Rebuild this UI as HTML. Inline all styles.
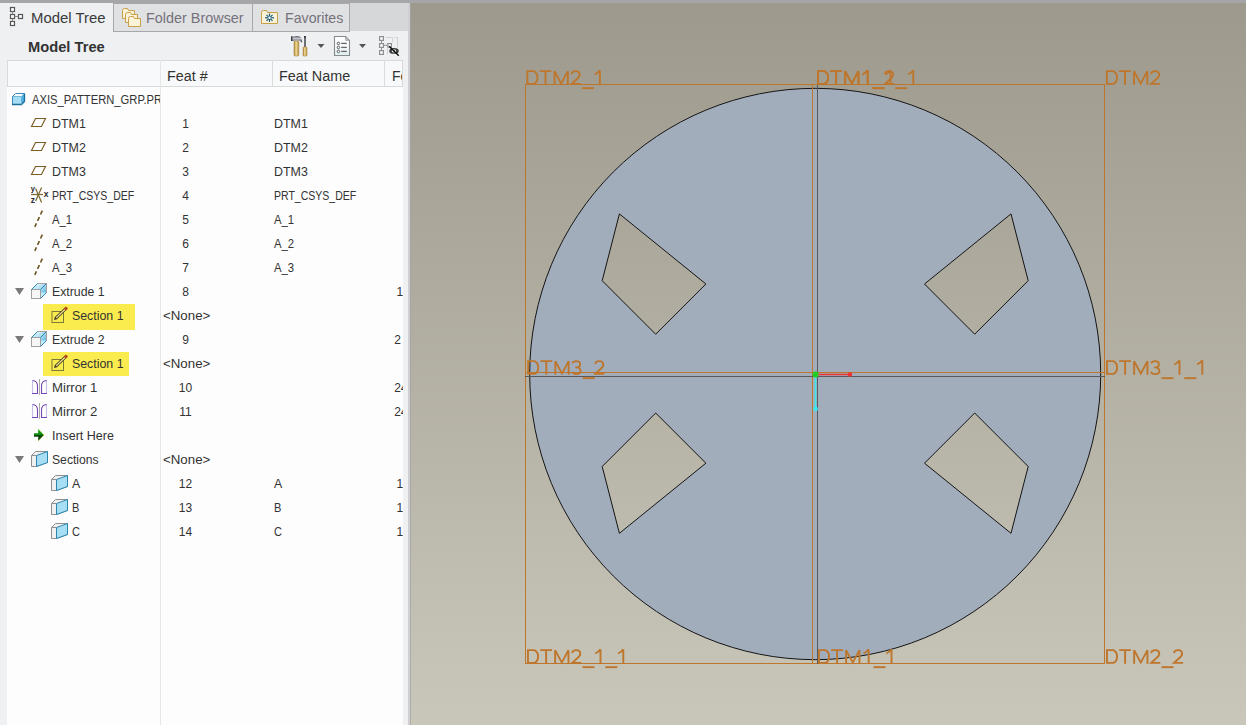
<!DOCTYPE html>
<html><head><meta charset="utf-8"><title>Model Tree</title>
<style>
html,body{margin:0;padding:0;width:1246px;height:725px;overflow:hidden;background:#eef0f2;}
svg text{font-family:"Liberation Sans", sans-serif;}
svg{display:block;}
</style></head>
<body>
<svg width="1246" height="725" viewBox="0 0 1246 725" style='font-family:"Liberation Sans", sans-serif'>
<defs>
<linearGradient id="bg" x1="0" y1="3" x2="0" y2="725" gradientUnits="userSpaceOnUse">
<stop offset="0" stop-color="#9d9a8d"/>
<stop offset="1" stop-color="#c9c6ba"/>
</linearGradient>
<linearGradient id="cubeF" x1="0" y1="0" x2="1" y2="1">
<stop offset="0" stop-color="#e4f6fc"/><stop offset="1" stop-color="#62b8e2"/>
</linearGradient>
</defs>
<rect x="0" y="0" width="1246" height="725" fill="#eef0f2"/>
<rect x="410" y="3" width="836" height="722" fill="url(#bg)"/>
<rect x="0" y="0" width="1246" height="3" fill="#a6a5a8"/>
<path d="M529.7,374 A285.5,285.5 0 1,0 1100.7,374 A285.5,285.5 0 1,0 529.7,374 Z M619.4,213.9 L705.9,284.0 L655.7,334.2 L602.2,280.7 Z M1011.0,213.9 L924.5,284.0 L974.7,334.2 L1028.2,280.7 Z M619.4,533.3 L705.9,463.2 L655.7,413.0 L602.2,466.5 Z M1011.0,533.3 L924.5,463.2 L974.7,413.0 L1028.2,466.5 Z " fill="#a2adbc" fill-rule="evenodd" stroke="#141414" stroke-width="1"/>
<rect x="525.5" y="84.5" width="579" height="579" fill="none" stroke="#be762c" stroke-width="1"/>
<line x1="525" y1="372.5" x2="1105" y2="372.5" stroke="#be762c" stroke-width="1"/>
<line x1="812.5" y1="84" x2="812.5" y2="664" stroke="#be762c" stroke-width="1"/>
<line x1="817.5" y1="85" x2="817.5" y2="664" stroke="#5a5a5a" stroke-width="1"/>
<line x1="525" y1="376.5" x2="1105" y2="376.5" stroke="#5a5a5a" stroke-width="1"/>
<line x1="815" y1="374.5" x2="850" y2="374.5" stroke="#f03030" stroke-width="1.6"/>
<circle cx="850" cy="374.5" r="2.2" fill="#f03030"/>
<line x1="815.5" y1="374" x2="815.5" y2="409" stroke="#3ce8f0" stroke-width="1.6"/>
<circle cx="815.5" cy="409" r="2.4" fill="#3ce8f0"/>
<circle cx="815.5" cy="374.5" r="3" fill="#20d020"/>
<g fill="none" stroke="#be762c" stroke-width="1.9" stroke-linejoin="miter"><path transform="translate(526.40,84.8)" d="M0.95,-0.95 L0.95,-13.65 L7.3,-13.65 C8.8,-13.2 10.2,-11.6 10.9,-9.5 L11.05,-7.3 L10.9,-5.1 C10.2,-3 8.8,-1.4 7.3,-0.95 Z"/><path transform="translate(539.60,84.8)" d="M0,-13.65 L11.8,-13.65 M5.9,-13.65 L5.9,0"/><path transform="translate(553.60,84.8)" d="M0.95,0 L0.95,-13.65 L7.6,-1.2 L14.25,-13.65 L14.25,0"/><path transform="translate(570.50,84.8)" d="M1.1,-10.6 C1.3,-12.9 2.9,-13.65 5.2,-13.65 C7.7,-13.65 9.2,-12.3 9.2,-10.1 C9.2,-8.2 8,-6.9 5.6,-5 L1.2,-0.95 L10.2,-0.95"/><path transform="translate(581.90,84.8)" d="M0,3.35 L12,3.35"/><path transform="translate(593.30,84.8)" d="M1.4,-10.3 C3.5,-11.2 5.2,-12.4 6.5,-14.6 M6.6,-14.6 L6.6,0"/></g>
<g fill="none" stroke="#be762c" stroke-width="1.9" stroke-linejoin="miter"><path transform="translate(817.00,84.8)" d="M0.95,-0.95 L0.95,-13.65 L7.3,-13.65 C8.8,-13.2 10.2,-11.6 10.9,-9.5 L11.05,-7.3 L10.9,-5.1 C10.2,-3 8.8,-1.4 7.3,-0.95 Z"/><path transform="translate(830.20,84.8)" d="M0,-13.65 L11.8,-13.65 M5.9,-13.65 L5.9,0"/><path transform="translate(844.20,84.8)" d="M0.95,0 L0.95,-13.65 L7.6,-1.2 L14.25,-13.65 L14.25,0"/><path transform="translate(861.10,84.8)" d="M1.4,-10.3 C3.5,-11.2 5.2,-12.4 6.5,-14.6 M6.6,-14.6 L6.6,0"/><path transform="translate(872.50,84.8)" d="M0,3.35 L12,3.35"/><path transform="translate(883.90,84.8)" d="M1.4,-10.3 C3.5,-11.2 5.2,-12.4 6.5,-14.6 M6.6,-14.6 L6.6,0"/><path transform="translate(895.30,84.8)" d="M0,3.35 L12,3.35"/><path transform="translate(906.70,84.8)" d="M1.4,-10.3 C3.5,-11.2 5.2,-12.4 6.5,-14.6 M6.6,-14.6 L6.6,0"/></g>
<g fill="none" stroke="#be762c" stroke-width="1.9" stroke-linejoin="miter"><path transform="translate(817.00,84.8)" d="M0.95,-0.95 L0.95,-13.65 L7.3,-13.65 C8.8,-13.2 10.2,-11.6 10.9,-9.5 L11.05,-7.3 L10.9,-5.1 C10.2,-3 8.8,-1.4 7.3,-0.95 Z"/><path transform="translate(830.20,84.8)" d="M0,-13.65 L11.8,-13.65 M5.9,-13.65 L5.9,0"/><path transform="translate(844.20,84.8)" d="M0.95,0 L0.95,-13.65 L7.6,-1.2 L14.25,-13.65 L14.25,0"/><path transform="translate(861.10,84.8)" d="M1.4,-10.3 C3.5,-11.2 5.2,-12.4 6.5,-14.6 M6.6,-14.6 L6.6,0"/><path transform="translate(872.50,84.8)" d="M0,3.35 L12,3.35"/><path transform="translate(883.90,84.8)" d="M1.1,-10.6 C1.3,-12.9 2.9,-13.65 5.2,-13.65 C7.7,-13.65 9.2,-12.3 9.2,-10.1 C9.2,-8.2 8,-6.9 5.6,-5 L1.2,-0.95 L10.2,-0.95"/></g>
<g fill="none" stroke="#be762c" stroke-width="1.9" stroke-linejoin="miter"><path transform="translate(1105.90,84.8)" d="M0.95,-0.95 L0.95,-13.65 L7.3,-13.65 C8.8,-13.2 10.2,-11.6 10.9,-9.5 L11.05,-7.3 L10.9,-5.1 C10.2,-3 8.8,-1.4 7.3,-0.95 Z"/><path transform="translate(1119.10,84.8)" d="M0,-13.65 L11.8,-13.65 M5.9,-13.65 L5.9,0"/><path transform="translate(1133.10,84.8)" d="M0.95,0 L0.95,-13.65 L7.6,-1.2 L14.25,-13.65 L14.25,0"/><path transform="translate(1150.00,84.8)" d="M1.1,-10.6 C1.3,-12.9 2.9,-13.65 5.2,-13.65 C7.7,-13.65 9.2,-12.3 9.2,-10.1 C9.2,-8.2 8,-6.9 5.6,-5 L1.2,-0.95 L10.2,-0.95"/></g>
<g fill="none" stroke="#be762c" stroke-width="1.9" stroke-linejoin="miter"><path transform="translate(527.20,374.8)" d="M0.95,-0.95 L0.95,-13.65 L7.3,-13.65 C8.8,-13.2 10.2,-11.6 10.9,-9.5 L11.05,-7.3 L10.9,-5.1 C10.2,-3 8.8,-1.4 7.3,-0.95 Z"/><path transform="translate(540.40,374.8)" d="M0,-13.65 L11.8,-13.65 M5.9,-13.65 L5.9,0"/><path transform="translate(554.40,374.8)" d="M0.95,0 L0.95,-13.65 L7.6,-1.2 L14.25,-13.65 L14.25,0"/><path transform="translate(571.30,374.8)" d="M1.0,-11.6 C1.7,-13.1 3.1,-13.65 5.0,-13.65 C7.5,-13.65 8.8,-12.3 8.8,-10.4 C8.8,-8.4 7.3,-7.4 4.9,-7.4 L4.0,-7.4 M4.9,-7.4 C7.8,-7.4 9.3,-5.9 9.3,-3.8 C9.3,-1.7 7.6,-0.7 5.0,-0.7 C2.8,-0.7 1.4,-1.4 0.8,-2.9"/><path transform="translate(582.70,374.8)" d="M0,3.35 L12,3.35"/><path transform="translate(594.10,374.8)" d="M1.1,-10.6 C1.3,-12.9 2.9,-13.65 5.2,-13.65 C7.7,-13.65 9.2,-12.3 9.2,-10.1 C9.2,-8.2 8,-6.9 5.6,-5 L1.2,-0.95 L10.2,-0.95"/></g>
<g fill="none" stroke="#be762c" stroke-width="1.9" stroke-linejoin="miter"><path transform="translate(1106.00,374.8)" d="M0.95,-0.95 L0.95,-13.65 L7.3,-13.65 C8.8,-13.2 10.2,-11.6 10.9,-9.5 L11.05,-7.3 L10.9,-5.1 C10.2,-3 8.8,-1.4 7.3,-0.95 Z"/><path transform="translate(1119.20,374.8)" d="M0,-13.65 L11.8,-13.65 M5.9,-13.65 L5.9,0"/><path transform="translate(1133.20,374.8)" d="M0.95,0 L0.95,-13.65 L7.6,-1.2 L14.25,-13.65 L14.25,0"/><path transform="translate(1150.10,374.8)" d="M1.0,-11.6 C1.7,-13.1 3.1,-13.65 5.0,-13.65 C7.5,-13.65 8.8,-12.3 8.8,-10.4 C8.8,-8.4 7.3,-7.4 4.9,-7.4 L4.0,-7.4 M4.9,-7.4 C7.8,-7.4 9.3,-5.9 9.3,-3.8 C9.3,-1.7 7.6,-0.7 5.0,-0.7 C2.8,-0.7 1.4,-1.4 0.8,-2.9"/><path transform="translate(1161.50,374.8)" d="M0,3.35 L12,3.35"/><path transform="translate(1172.90,374.8)" d="M1.4,-10.3 C3.5,-11.2 5.2,-12.4 6.5,-14.6 M6.6,-14.6 L6.6,0"/><path transform="translate(1184.30,374.8)" d="M0,3.35 L12,3.35"/><path transform="translate(1195.70,374.8)" d="M1.4,-10.3 C3.5,-11.2 5.2,-12.4 6.5,-14.6 M6.6,-14.6 L6.6,0"/></g>
<g fill="none" stroke="#be762c" stroke-width="1.9" stroke-linejoin="miter"><path transform="translate(527.00,663.8)" d="M0.95,-0.95 L0.95,-13.65 L7.3,-13.65 C8.8,-13.2 10.2,-11.6 10.9,-9.5 L11.05,-7.3 L10.9,-5.1 C10.2,-3 8.8,-1.4 7.3,-0.95 Z"/><path transform="translate(540.20,663.8)" d="M0,-13.65 L11.8,-13.65 M5.9,-13.65 L5.9,0"/><path transform="translate(554.20,663.8)" d="M0.95,0 L0.95,-13.65 L7.6,-1.2 L14.25,-13.65 L14.25,0"/><path transform="translate(571.10,663.8)" d="M1.1,-10.6 C1.3,-12.9 2.9,-13.65 5.2,-13.65 C7.7,-13.65 9.2,-12.3 9.2,-10.1 C9.2,-8.2 8,-6.9 5.6,-5 L1.2,-0.95 L10.2,-0.95"/><path transform="translate(582.50,663.8)" d="M0,3.35 L12,3.35"/><path transform="translate(593.90,663.8)" d="M1.4,-10.3 C3.5,-11.2 5.2,-12.4 6.5,-14.6 M6.6,-14.6 L6.6,0"/><path transform="translate(605.30,663.8)" d="M0,3.35 L12,3.35"/><path transform="translate(616.70,663.8)" d="M1.4,-10.3 C3.5,-11.2 5.2,-12.4 6.5,-14.6 M6.6,-14.6 L6.6,0"/></g>
<g fill="none" stroke="#be762c" stroke-width="1.9" stroke-linejoin="miter"><path transform="translate(818.00,663.8)" d="M0.95,-0.95 L0.95,-13.65 L7.3,-13.65 C8.8,-13.2 10.2,-11.6 10.9,-9.5 L11.05,-7.3 L10.9,-5.1 C10.2,-3 8.8,-1.4 7.3,-0.95 Z"/><path transform="translate(831.20,663.8)" d="M0,-13.65 L11.8,-13.65 M5.9,-13.65 L5.9,0"/><path transform="translate(845.20,663.8)" d="M0.95,0 L0.95,-13.65 L7.6,-1.2 L14.25,-13.65 L14.25,0"/><path transform="translate(862.10,663.8)" d="M1.4,-10.3 C3.5,-11.2 5.2,-12.4 6.5,-14.6 M6.6,-14.6 L6.6,0"/><path transform="translate(873.50,663.8)" d="M0,3.35 L12,3.35"/><path transform="translate(884.90,663.8)" d="M1.4,-10.3 C3.5,-11.2 5.2,-12.4 6.5,-14.6 M6.6,-14.6 L6.6,0"/></g>
<g fill="none" stroke="#be762c" stroke-width="1.9" stroke-linejoin="miter"><path transform="translate(1106.00,663.8)" d="M0.95,-0.95 L0.95,-13.65 L7.3,-13.65 C8.8,-13.2 10.2,-11.6 10.9,-9.5 L11.05,-7.3 L10.9,-5.1 C10.2,-3 8.8,-1.4 7.3,-0.95 Z"/><path transform="translate(1119.20,663.8)" d="M0,-13.65 L11.8,-13.65 M5.9,-13.65 L5.9,0"/><path transform="translate(1133.20,663.8)" d="M0.95,0 L0.95,-13.65 L7.6,-1.2 L14.25,-13.65 L14.25,0"/><path transform="translate(1150.10,663.8)" d="M1.1,-10.6 C1.3,-12.9 2.9,-13.65 5.2,-13.65 C7.7,-13.65 9.2,-12.3 9.2,-10.1 C9.2,-8.2 8,-6.9 5.6,-5 L1.2,-0.95 L10.2,-0.95"/><path transform="translate(1161.50,663.8)" d="M0,3.35 L12,3.35"/><path transform="translate(1172.90,663.8)" d="M1.1,-10.6 C1.3,-12.9 2.9,-13.65 5.2,-13.65 C7.7,-13.65 9.2,-12.3 9.2,-10.1 C9.2,-8.2 8,-6.9 5.6,-5 L1.2,-0.95 L10.2,-0.95"/></g>
<rect x="350" y="3" width="58" height="28" fill="#d6d7d9"/>
<rect x="113.5" y="3.5" width="139" height="28" fill="#e0e1e3" stroke="#a8a8a8" stroke-width="1"/>
<rect x="252.5" y="3.5" width="97" height="28" fill="#e0e1e3" stroke="#a8a8a8" stroke-width="1"/>
<rect x="0" y="32" width="408" height="693" fill="#eef0f2"/>
<rect x="408" y="3" width="2" height="722" fill="#d0d0d4"/>
<rect x="410" y="3" width="1" height="722" fill="#a3a49f" opacity="0.7"/>
<text x="31" y="22.8" font-size="15" fill="#3a3a3a" font-weight="normal" textLength="74.45" lengthAdjust="spacingAndGlyphs" >Model Tree</text>
<text x="146" y="22.8" font-size="15" fill="#75727c" font-weight="normal" textLength="97.65" lengthAdjust="spacingAndGlyphs" >Folder Browser</text>
<text x="285" y="22.8" font-size="15" fill="#75727c" font-weight="normal" textLength="58.33" lengthAdjust="spacingAndGlyphs" >Favorites</text>
<text x="28" y="52" font-size="14.5" fill="#333333" font-weight="bold" textLength="76.72" lengthAdjust="spacingAndGlyphs" >Model Tree</text>
<rect x="7" y="60" width="396" height="665" fill="#fdfdfd"/>
<rect x="7.5" y="60.5" width="395" height="26" fill="#f8f9fa" stroke="#d9d9d9" stroke-width="1"/>
<line x1="160.5" y1="60" x2="160.5" y2="725" stroke="#e6e6e6" stroke-width="1"/>
<line x1="272.5" y1="60" x2="272.5" y2="86" stroke="#dcdcdc" stroke-width="1"/>
<line x1="384.5" y1="60" x2="384.5" y2="86" stroke="#dcdcdc" stroke-width="1"/>
<text x="167" y="80.5" font-size="14" fill="#333333" font-weight="normal" textLength="40.62" lengthAdjust="spacingAndGlyphs" >Feat #</text>
<text x="279" y="80.5" font-size="14" fill="#333333" font-weight="normal" textLength="71.14" lengthAdjust="spacingAndGlyphs" >Feat Name</text>
<svg x="385" y="60" width="17" height="26"><text x="7" y="20.5" font-size="14" fill="#333333">Feat Type</text></svg>
<g transform="translate(0,0)">
<path d="M12.5,96.5 L15.5,93.5 L24.5,93.5 L21.5,96.5 Z" fill="#f4fcff"/>
<path d="M21.5,96.5 L24.5,93.5 L24.5,101.5 L21.5,104.5 Z" fill="#4cb2e4"/>
<rect x="12.5" y="96.5" width="9" height="8" fill="#a6ddf5"/>
<path d="M12.5,96.5 L15.5,93.5 L24.5,93.5 L24.5,101.5 L21.5,104.5 L12.5,104.5 Z" fill="none" stroke="#3a8ab8" stroke-width="1"/>
<path d="M12,104.5 L21.5,104.5 L24.5,101.5 L24.5,93.5" fill="none" stroke="#1f6f9c" stroke-width="1.3"/>
<path d="M12.5,96.5 L21.5,96.5 L24.5,93.5 M21.5,96.5 L21.5,104.5" fill="none" stroke="#5aaad0" stroke-width="0.8"/>
</g>
<svg x="0" y="87" width="160" height="24"><text x="32" y="16.5" font-size="12" fill="#333333" font-weight="normal" textLength="136.73" lengthAdjust="spacingAndGlyphs" >AXIS_PATTERN_GRP.PRT</text></svg>
<path d="M35.5,118.5 L45.5,118.5 L41.5,126.5 L31.5,126.5 Z" fill="none" stroke="#7a5c25" stroke-width="1.15"/>
<text x="52" y="127.5" font-size="12" fill="#333333" font-weight="normal" textLength="33.82" lengthAdjust="spacingAndGlyphs" >DTM1</text>
<text x="185.5" y="127.5" font-size="12" fill="#333333" font-weight="normal" text-anchor="middle">1</text>
<text x="274" y="127.5" font-size="12" fill="#333333" font-weight="normal" textLength="33.82" lengthAdjust="spacingAndGlyphs" >DTM1</text>
<path d="M35.5,142.5 L45.5,142.5 L41.5,150.5 L31.5,150.5 Z" fill="none" stroke="#7a5c25" stroke-width="1.15"/>
<text x="52" y="151.5" font-size="12" fill="#333333" font-weight="normal" textLength="33.82" lengthAdjust="spacingAndGlyphs" >DTM2</text>
<text x="185.5" y="151.5" font-size="12" fill="#333333" font-weight="normal" text-anchor="middle">2</text>
<text x="274" y="151.5" font-size="12" fill="#333333" font-weight="normal" textLength="33.82" lengthAdjust="spacingAndGlyphs" >DTM2</text>
<path d="M35.5,166.5 L45.5,166.5 L41.5,174.5 L31.5,174.5 Z" fill="none" stroke="#7a5c25" stroke-width="1.15"/>
<text x="52" y="175.5" font-size="12" fill="#333333" font-weight="normal" textLength="33.82" lengthAdjust="spacingAndGlyphs" >DTM3</text>
<text x="185.5" y="175.5" font-size="12" fill="#333333" font-weight="normal" text-anchor="middle">3</text>
<text x="274" y="175.5" font-size="12" fill="#333333" font-weight="normal" textLength="33.82" lengthAdjust="spacingAndGlyphs" >DTM3</text>
<g stroke="#7a6833" stroke-width="1.25"><line x1="31" y1="194.5" x2="43" y2="194.5"/><line x1="41.6" y1="187.5" x2="35.6" y2="201"/><line x1="35.6" y1="188.5" x2="41.6" y2="202.5"/></g><text x="30.8" y="190.8" font-size="7.5" font-weight="bold" fill="#2a2a2a">y</text><text x="30.8" y="203.2" font-size="8.5" font-weight="bold" fill="#2a2a2a">z</text><text x="43.8" y="197.2" font-size="8.5" font-weight="bold" fill="#2a2a2a">x</text>
<text x="52" y="199.5" font-size="12" fill="#333333" font-weight="normal" textLength="82.15" lengthAdjust="spacingAndGlyphs" >PRT_CSYS_DEF</text>
<text x="185.5" y="199.5" font-size="12" fill="#333333" font-weight="normal" text-anchor="middle">4</text>
<text x="274" y="199.5" font-size="12" fill="#333333" font-weight="normal" textLength="82.15" lengthAdjust="spacingAndGlyphs" >PRT_CSYS_DEF</text>
<line x1="42.3" y1="210.7" x2="34.8" y2="226.8" stroke="#6b5520" stroke-width="1.6" stroke-dasharray="4.2,2.8"/>
<text x="52" y="223.5" font-size="12" fill="#333333" font-weight="normal" textLength="20.16" lengthAdjust="spacingAndGlyphs" >A_1</text>
<text x="185.5" y="223.5" font-size="12" fill="#333333" font-weight="normal" text-anchor="middle">5</text>
<text x="274" y="223.5" font-size="12" fill="#333333" font-weight="normal" textLength="20.16" lengthAdjust="spacingAndGlyphs" >A_1</text>
<line x1="42.3" y1="234.7" x2="34.8" y2="250.8" stroke="#6b5520" stroke-width="1.6" stroke-dasharray="4.2,2.8"/>
<text x="52" y="247.5" font-size="12" fill="#333333" font-weight="normal" textLength="20.16" lengthAdjust="spacingAndGlyphs" >A_2</text>
<text x="185.5" y="247.5" font-size="12" fill="#333333" font-weight="normal" text-anchor="middle">6</text>
<text x="274" y="247.5" font-size="12" fill="#333333" font-weight="normal" textLength="20.16" lengthAdjust="spacingAndGlyphs" >A_2</text>
<line x1="42.3" y1="258.7" x2="34.8" y2="274.8" stroke="#6b5520" stroke-width="1.6" stroke-dasharray="4.2,2.8"/>
<text x="52" y="271.5" font-size="12" fill="#333333" font-weight="normal" textLength="20.16" lengthAdjust="spacingAndGlyphs" >A_3</text>
<text x="185.5" y="271.5" font-size="12" fill="#333333" font-weight="normal" text-anchor="middle">7</text>
<text x="274" y="271.5" font-size="12" fill="#333333" font-weight="normal" textLength="20.16" lengthAdjust="spacingAndGlyphs" >A_3</text>
<g><path d="M15,288 L24,288 L19.5,295 Z" fill="#7a7a7a"/></g>
<g transform="translate(0,1)">
<path d="M31.5,288.5 L37.5,282.5 L46.5,282.5 L46.5,291.5 L40.5,297.5 L31.5,297.5 Z" fill="#c4eaf8"/>
<rect x="37.5" y="282.5" width="9" height="9" fill="url(#cubeF)"/>
<path d="M37.5,282.5 L46.5,282.5 L46.5,291.5" fill="none" stroke="#ac9c9c" stroke-width="1"/>
<rect x="31.5" y="288.5" width="9" height="9" fill="#f6f6f6" stroke="#a0a0a0" stroke-width="1"/>
<path d="M31.5,288.5 L37.5,282.5 M40.5,288.5 L46.5,282.5 M40.5,297.5 L46.5,291.5" stroke="#2b8ab8" stroke-width="1" fill="none"/></g>
<text x="52" y="295.5" font-size="12" fill="#333333" font-weight="normal" textLength="52.57" lengthAdjust="spacingAndGlyphs" >Extrude 1</text>
<text x="185.5" y="295.5" font-size="12" fill="#333333" font-weight="normal" text-anchor="middle">8</text>
<svg x="385" y="279" width="18" height="24"><text x="11.5" y="16.5" font-size="12" fill="#333333" font-weight="normal" >1</text></svg>
<rect x="43" y="304" width="92" height="26" fill="#faeb4e"/>
<g><rect x="52" y="311.5" width="11.5" height="11" fill="none" stroke="#7c7a38" stroke-width="1"/>
<line x1="55.6" y1="318.3" x2="65.4" y2="309" stroke="#4a4228" stroke-width="3"/>
<line x1="55.8" y1="318.1" x2="65.2" y2="309.2" stroke="#f0e488" stroke-width="1.3"/>
<path d="M54,320 L55,317 L57,319 Z" fill="#2a2a20"/>
<circle cx="65.9" cy="308.4" r="1.7" fill="#b8401c"/></g>
<text x="72" y="319.5" font-size="12" fill="#333333" font-weight="normal" textLength="51.53" lengthAdjust="spacingAndGlyphs" >Section 1</text>
<text x="163" y="319.5" font-size="12" fill="#333333" font-weight="normal" textLength="47.32" lengthAdjust="spacingAndGlyphs" >&lt;None&gt;</text>
<g><path d="M15,336 L24,336 L19.5,343 Z" fill="#7a7a7a"/></g>
<g transform="translate(0,1)">
<path d="M31.5,336.5 L37.5,330.5 L46.5,330.5 L46.5,339.5 L40.5,345.5 L31.5,345.5 Z" fill="#c4eaf8"/>
<rect x="37.5" y="330.5" width="9" height="9" fill="url(#cubeF)"/>
<path d="M37.5,330.5 L46.5,330.5 L46.5,339.5" fill="none" stroke="#ac9c9c" stroke-width="1"/>
<rect x="31.5" y="336.5" width="9" height="9" fill="#f6f6f6" stroke="#a0a0a0" stroke-width="1"/>
<path d="M31.5,336.5 L37.5,330.5 M40.5,336.5 L46.5,330.5 M40.5,345.5 L46.5,339.5" stroke="#2b8ab8" stroke-width="1" fill="none"/></g>
<text x="52" y="343.5" font-size="12" fill="#333333" font-weight="normal" textLength="52.57" lengthAdjust="spacingAndGlyphs" >Extrude 2</text>
<text x="185.5" y="343.5" font-size="12" fill="#333333" font-weight="normal" text-anchor="middle">9</text>
<svg x="385" y="327" width="18" height="24"><text x="9.2" y="16.5" font-size="12" fill="#333333" font-weight="normal" >2</text></svg>
<rect x="43" y="352" width="86" height="24" fill="#faeb4e"/>
<g><rect x="52" y="359.5" width="11.5" height="11" fill="none" stroke="#7c7a38" stroke-width="1"/>
<line x1="55.6" y1="366.3" x2="65.4" y2="357" stroke="#4a4228" stroke-width="3"/>
<line x1="55.8" y1="366.1" x2="65.2" y2="357.2" stroke="#f0e488" stroke-width="1.3"/>
<path d="M54,368 L55,365 L57,367 Z" fill="#2a2a20"/>
<circle cx="65.9" cy="356.4" r="1.7" fill="#b8401c"/></g>
<text x="72" y="367.5" font-size="12" fill="#333333" font-weight="normal" textLength="51.53" lengthAdjust="spacingAndGlyphs" >Section 1</text>
<text x="163" y="367.5" font-size="12" fill="#333333" font-weight="normal" textLength="47.32" lengthAdjust="spacingAndGlyphs" >&lt;None&gt;</text>
<g fill="none" stroke-width="1.1">
<path d="M32.5,380.5 L32.5,393.5 M46.5,380.5 L46.5,393.5" stroke="#c4bdea"/>
<path d="M32.5,380.5 Q37.5,380.8 37.5,386 L37.5,393.5 L32,393.5" stroke="#7448b4"/>
<path d="M46.5,380.5 Q41.5,380.8 41.5,386 L41.5,393.5 L47,393.5" stroke="#7448b4"/>
<line x1="39.5" y1="379" x2="39.5" y2="395" stroke="#a0a0a0" stroke-width="0.9"/></g>
<text x="52" y="391.5" font-size="12" fill="#333333" font-weight="normal" textLength="45.40" lengthAdjust="spacingAndGlyphs" >Mirror 1</text>
<text x="185.5" y="391.5" font-size="12" fill="#333333" font-weight="normal" text-anchor="middle">10</text>
<svg x="385" y="375" width="18" height="24"><text x="9.2" y="16.5" font-size="12" fill="#333333" font-weight="normal" >24</text></svg>
<g fill="none" stroke-width="1.1">
<path d="M32.5,404.5 L32.5,417.5 M46.5,404.5 L46.5,417.5" stroke="#c4bdea"/>
<path d="M32.5,404.5 Q37.5,404.8 37.5,410 L37.5,417.5 L32,417.5" stroke="#7448b4"/>
<path d="M46.5,404.5 Q41.5,404.8 41.5,410 L41.5,417.5 L47,417.5" stroke="#7448b4"/>
<line x1="39.5" y1="403" x2="39.5" y2="419" stroke="#a0a0a0" stroke-width="0.9"/></g>
<text x="52" y="415.5" font-size="12" fill="#333333" font-weight="normal" textLength="45.40" lengthAdjust="spacingAndGlyphs" >Mirror 2</text>
<text x="185.5" y="415.5" font-size="12" fill="#333333" font-weight="normal" text-anchor="middle">11</text>
<svg x="385" y="399" width="18" height="24"><text x="9.2" y="16.5" font-size="12" fill="#333333" font-weight="normal" >24</text></svg>
<defs><linearGradient id="arr" x1="0" y1="0" x2="0" y2="1"><stop offset="0" stop-color="#10a810"/><stop offset="0.5" stop-color="#0c8a0c"/><stop offset="0.52" stop-color="#0a4a0a"/><stop offset="1" stop-color="#0c3a10"/></linearGradient></defs>
<path d="M34,433.2 L38.2,433.2 L38.2,429 L44,435 L38.2,441 L38.2,436.8 L34,436.8 Z" fill="url(#arr)"/>
<path d="M38.2,429 L44,435 L38.2,441" fill="none" stroke="#b8e030" stroke-width="0.5"/>
<text x="52" y="439.5" font-size="12" fill="#333333" font-weight="normal" textLength="61.96" lengthAdjust="spacingAndGlyphs" >Insert Here</text>
<g><path d="M15,456 L24,456 L19.5,463 Z" fill="#7a7a7a"/>
<path d="M31.5,455.5 L35.5,451.5 L47.5,451.5 L47.5,462.5 L36.5,466.5 L31.5,466.5 Z" fill="#f0f0f0" stroke="#909090" stroke-width="1"/>
<path d="M36.5,455.5 L47.5,451.5 L47.5,462.5 L36.5,466.5 Z" fill="#a8def4" stroke="#2a86b0" stroke-width="1"/>
<line x1="31.5" y1="455.5" x2="36.5" y2="455.5" stroke="#909090"/></g>
<text x="52" y="463.5" font-size="12" fill="#333333" font-weight="normal" textLength="46.72" lengthAdjust="spacingAndGlyphs" >Sections</text>
<text x="163" y="463.5" font-size="12" fill="#333333" font-weight="normal" textLength="47.32" lengthAdjust="spacingAndGlyphs" >&lt;None&gt;</text>
<g transform="translate(20,0)"><path d="M31.5,479.5 L35.5,475.5 L47.5,475.5 L47.5,486.5 L36.5,490.5 L31.5,490.5 Z" fill="#f0f0f0" stroke="#909090" stroke-width="1"/>
<path d="M36.5,479.5 L47.5,475.5 L47.5,486.5 L36.5,490.5 Z" fill="#a8def4" stroke="#2a86b0" stroke-width="1"/>
<line x1="31.5" y1="479.5" x2="36.5" y2="479.5" stroke="#909090"/></g>
<text x="72" y="487.5" font-size="12" fill="#333333" font-weight="normal" textLength="8.19" lengthAdjust="spacingAndGlyphs" >A</text>
<text x="185.5" y="487.5" font-size="12" fill="#333333" font-weight="normal" text-anchor="middle">12</text>
<text x="274" y="487.5" font-size="12" fill="#333333" font-weight="normal" textLength="8.19" lengthAdjust="spacingAndGlyphs" >A</text>
<svg x="385" y="471" width="18" height="24"><text x="11.5" y="16.5" font-size="12" fill="#333333" font-weight="normal" >1</text></svg>
<g transform="translate(20,0)"><path d="M31.5,503.5 L35.5,499.5 L47.5,499.5 L47.5,510.5 L36.5,514.5 L31.5,514.5 Z" fill="#f0f0f0" stroke="#909090" stroke-width="1"/>
<path d="M36.5,503.5 L47.5,499.5 L47.5,510.5 L36.5,514.5 Z" fill="#a8def4" stroke="#2a86b0" stroke-width="1"/>
<line x1="31.5" y1="503.5" x2="36.5" y2="503.5" stroke="#909090"/></g>
<text x="72" y="511.5" font-size="12" fill="#333333" font-weight="normal" textLength="7.38" lengthAdjust="spacingAndGlyphs" >B</text>
<text x="185.5" y="511.5" font-size="12" fill="#333333" font-weight="normal" text-anchor="middle">13</text>
<text x="274" y="511.5" font-size="12" fill="#333333" font-weight="normal" textLength="7.38" lengthAdjust="spacingAndGlyphs" >B</text>
<svg x="385" y="495" width="18" height="24"><text x="11.5" y="16.5" font-size="12" fill="#333333" font-weight="normal" >1</text></svg>
<g transform="translate(20,0)"><path d="M31.5,527.5 L35.5,523.5 L47.5,523.5 L47.5,534.5 L36.5,538.5 L31.5,538.5 Z" fill="#f0f0f0" stroke="#909090" stroke-width="1"/>
<path d="M36.5,527.5 L47.5,523.5 L47.5,534.5 L36.5,538.5 Z" fill="#a8def4" stroke="#2a86b0" stroke-width="1"/>
<line x1="31.5" y1="527.5" x2="36.5" y2="527.5" stroke="#909090"/></g>
<text x="72" y="535.5" font-size="12" fill="#333333" font-weight="normal" textLength="7.92" lengthAdjust="spacingAndGlyphs" >C</text>
<text x="185.5" y="535.5" font-size="12" fill="#333333" font-weight="normal" text-anchor="middle">14</text>
<text x="274" y="535.5" font-size="12" fill="#333333" font-weight="normal" textLength="7.92" lengthAdjust="spacingAndGlyphs" >C</text>
<svg x="385" y="519" width="18" height="24"><text x="11.5" y="16.5" font-size="12" fill="#333333" font-weight="normal" >1</text></svg>
<defs>
<linearGradient id="wood" x1="0" y1="0" x2="1" y2="0">
<stop offset="0" stop-color="#a88432"/><stop offset="0.45" stop-color="#f2dc98"/><stop offset="1" stop-color="#b08a38"/>
</linearGradient>
<linearGradient id="steel" x1="0" y1="0" x2="0" y2="1">
<stop offset="0" stop-color="#5c5c66"/><stop offset="0.4" stop-color="#c8c8d0"/><stop offset="1" stop-color="#3c3c46"/>
</linearGradient>
<linearGradient id="page" x1="0" y1="0" x2="0" y2="1">
<stop offset="0" stop-color="#ffffff"/><stop offset="0.6" stop-color="#f6f9fa"/><stop offset="1" stop-color="#d8eef0"/>
</linearGradient>
</defs>
<g>
<rect x="294" y="41" width="4.8" height="15" rx="1" fill="url(#wood)" stroke="#a07c30" stroke-width="0.5"/>
<path d="M291,36.4 L294,36.4 Q298,35.6 300.6,36.9 Q302.4,38.3 302.3,42.2 L301.1,42.2 Q300.6,40.7 299,40.5 L294,40.5 L294,41 L291,41 Z" fill="url(#steel)"/>
<rect x="291" y="36.4" width="1.4" height="4.6" fill="#3a3a44"/>
<rect x="304" y="36" width="2" height="11.5" fill="#6a7078"/>
<rect x="304" y="36" width="2" height="2" fill="#404048"/>
<rect x="303" y="47" width="4" height="9" rx="0.8" fill="url(#wood)" stroke="#a07c30" stroke-width="0.5"/>
<path d="M317.5,44 L324.5,44 L321,48 Z" fill="#555555"/>
<path d="M334.5,36.5 L345.6,36.5 L349.5,40.4 L349.5,55.5 L334.5,55.5 Z" fill="url(#page)" stroke="#8a8a8a" stroke-width="1.1"/>
<path d="M345.6,36.8 L345.6,40.4 L349.3,40.4 Z" fill="#c4cccc" stroke="#8a8a8a" stroke-width="0.6"/>
<g fill="#fff" stroke="#5e5e5e" stroke-width="1"><circle cx="338.4" cy="43.4" r="1.3"/><circle cx="338.4" cy="47.4" r="1.3"/><circle cx="338.4" cy="51.4" r="1.3"/></g>
<g stroke="#666666" stroke-width="1.3"><line x1="341.2" y1="43.4" x2="346.8" y2="43.4"/><line x1="341.2" y1="47.4" x2="346.8" y2="47.4"/><line x1="341.2" y1="51.4" x2="346.8" y2="51.4"/></g>
<path d="M359,44 L366,44 L362.5,48 Z" fill="#555555"/>
<g stroke="#d2d2d2" stroke-width="1" fill="none"><path d="M385.5,37.5 L392.5,37.5 L392.5,41 M394.5,37.5 L397.5,37.5 L397.5,47.5 M392.5,41 L392.5,42.5 M387.5,48 L387.5,54.5"/></g>
<g stroke="#8e8e8e" stroke-width="1"><line x1="381.5" y1="40" x2="381.5" y2="51"/><line x1="383.5" y1="45.3" x2="387.5" y2="45.3"/></g>
<g fill="#fff" stroke="#8e8e8e" stroke-width="1.2"><rect x="379.6" y="36.6" width="3.8" height="3.8"/><rect x="379.6" y="43.6" width="3.8" height="3.8"/><rect x="379.6" y="50.6" width="3.8" height="3.8"/><rect x="387.8" y="43.6" width="3.6" height="3.6"/></g>
<ellipse cx="394" cy="50.9" rx="4.8" ry="2.9" fill="#3a3a3a"/>
<ellipse cx="394" cy="50.9" rx="2.3" ry="1.7" fill="#e8e8e8"/>
<circle cx="394" cy="50.9" r="0.9" fill="#3a3a3a"/>
<line x1="389.2" y1="46.3" x2="398.8" y2="55.7" stroke="#0a0a0a" stroke-width="1.3"/>
</g>
<g fill="#fff" stroke="#555" stroke-width="1.2"><rect x="10.5" y="7.5" width="4" height="4"/><rect x="10.5" y="14.5" width="4" height="4"/><rect x="10.5" y="21.5" width="4" height="4"/><rect x="18.5" y="14.5" width="4" height="4"/></g>
<g stroke="#888" stroke-width="1"><line x1="12.5" y1="11.5" x2="12.5" y2="14.5"/><line x1="12.5" y1="18.5" x2="12.5" y2="21.5"/><line x1="14.5" y1="16.5" x2="18.5" y2="16.5"/></g>
<path d="M122.5,18.5 L122.5,10.5 Q122.5,8.5 124.5,8.5 L127.5,8.5 L128.5,10.5 L134.5,10.5 L134.5,18.5 Z" fill="#fbf3d8" stroke="#c9a04a" stroke-width="1"/><path d="M125.5,22.5 L125.5,14.5 Q125.5,12.5 127.5,12.5 L130.5,12.5 L131.5,14.5 L137.5,14.5 L137.5,22.5 Z" fill="#fbf3d8" stroke="#c9a04a" stroke-width="1"/><path d="M128.5,26.5 L128.5,18.5 Q128.5,16.5 130.5,16.5 L133.5,16.5 L134.5,18.5 L140.5,18.5 L140.5,26.5 Z" fill="#fbf3d8" stroke="#c9a04a" stroke-width="1"/>
<path d="M261.5,23.5 L261.5,12.5 Q261.5,10.5 263.5,10.5 L266.5,10.5 L267.5,12.5 L277.5,12.5 L277.5,23.5 Z" fill="#fbf3d8" stroke="#c9a04a" stroke-width="1"/>
<g stroke="#1a5a80" stroke-width="1.2"><line x1="269.5" y1="13.5" x2="269.5" y2="22"/><line x1="265" y1="17.8" x2="274" y2="17.8"/><line x1="266.5" y1="14.8" x2="272.5" y2="20.8"/><line x1="272.5" y1="14.8" x2="266.5" y2="20.8"/></g><circle cx="269.5" cy="17.8" r="1.2" fill="#fff"/>
</svg>
</body></html>
